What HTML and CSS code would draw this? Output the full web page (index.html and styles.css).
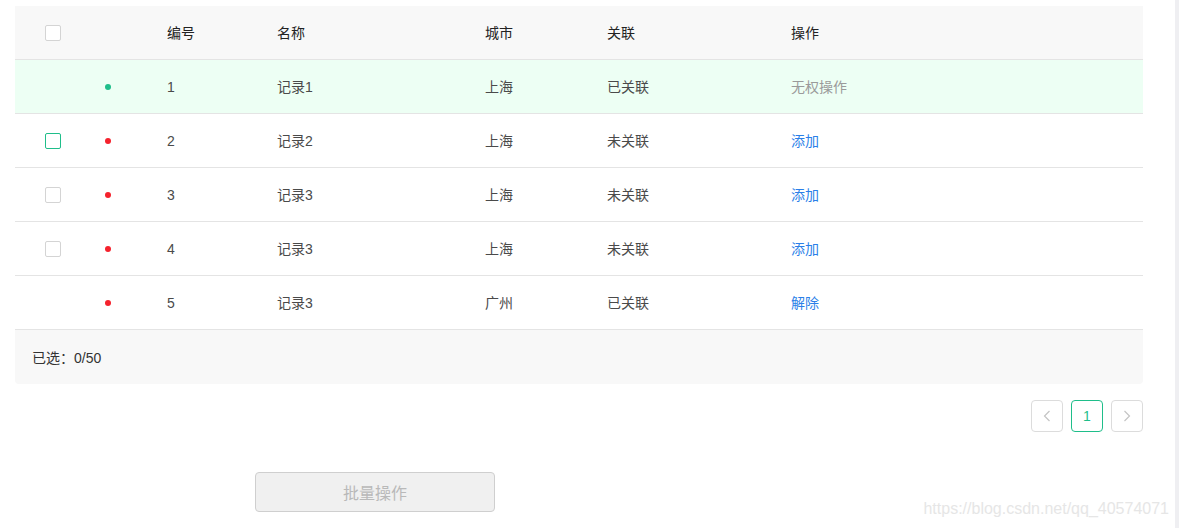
FILE: index.html
```html
<!DOCTYPE html>
<html lang="zh">
<head>
<meta charset="utf-8">
<title>列表</title>
<link rel="stylesheet" href="styles.css">
</head>
<body>
<div class="page">
  <main class="content">
    <div class="table">
      <div class="row head">
        <div class="cell c-check"><span class="checkbox"></span></div>
        <div class="cell c-dot"></div>
        <div class="cell">编号</div>
        <div class="cell">名称</div>
        <div class="cell">城市</div>
        <div class="cell">关联</div>
        <div class="cell">操作</div>
      </div>
      <div class="row highlight">
        <div class="cell c-check"></div>
        <div class="cell c-dot"><span class="dot green"></span></div>
        <div class="cell">1</div>
        <div class="cell">记录1</div>
        <div class="cell">上海</div>
        <div class="cell">已关联</div>
        <div class="cell muted">无权操作</div>
      </div>
      <div class="row">
        <div class="cell c-check"><span class="checkbox active"></span></div>
        <div class="cell c-dot"><span class="dot red"></span></div>
        <div class="cell">2</div>
        <div class="cell">记录2</div>
        <div class="cell">上海</div>
        <div class="cell">未关联</div>
        <div class="cell link">添加</div>
      </div>
      <div class="row">
        <div class="cell c-check"><span class="checkbox"></span></div>
        <div class="cell c-dot"><span class="dot red"></span></div>
        <div class="cell">3</div>
        <div class="cell">记录3</div>
        <div class="cell">上海</div>
        <div class="cell">未关联</div>
        <div class="cell link">添加</div>
      </div>
      <div class="row">
        <div class="cell c-check"><span class="checkbox"></span></div>
        <div class="cell c-dot"><span class="dot red"></span></div>
        <div class="cell">4</div>
        <div class="cell">记录3</div>
        <div class="cell">上海</div>
        <div class="cell">未关联</div>
        <div class="cell link">添加</div>
      </div>
      <div class="row">
        <div class="cell c-check"></div>
        <div class="cell c-dot"><span class="dot red"></span></div>
        <div class="cell">5</div>
        <div class="cell">记录3</div>
        <div class="cell">广州</div>
        <div class="cell">已关联</div>
        <div class="cell link">解除</div>
      </div>
      <div class="footer">已选：0/50</div>
    </div>
    <div class="pager">
      <span class="page-btn">
        <svg width="8" height="12" viewBox="0 0 8 12"><path d="M6.5 1 L1.5 6 L6.5 11" fill="none" stroke="#c4c4c4" stroke-width="1.2"/></svg>
      </span>
      <span class="page-btn current">1</span>
      <span class="page-btn">
        <svg width="8" height="12" viewBox="0 0 8 12"><path d="M1.5 1 L6.5 6 L1.5 11" fill="none" stroke="#c4c4c4" stroke-width="1.2"/></svg>
      </span>
    </div>
    <div class="actions">
      <button class="batch" disabled>批量操作</button>
    </div>
    <div class="watermark">https://blog.csdn.net/qq_40574071</div>
  </main>
  <aside class="scrollbar"></aside>
</div>
</body>
</html>
```
FILE: styles.css
```css
html, body {
  margin: 0;
  padding: 0;
  background: #ffffff;
}
body {
  font-family: "Liberation Sans", "Noto Sans CJK SC", sans-serif;
  font-size: 14px;
  color: #4a4a4a;
}
.page {
  display: flex;
  width: 1179px;
  height: 528px;
  overflow: hidden;
}
.content {
  position: relative;
  flex: 1;
  padding: 6px 0 0 15px;
}
.scrollbar {
  width: 4px;
  background: #efeff2;
}
.table {
  width: 1128px;
}
.row {
  display: grid;
  grid-template-columns: 60px 77px 110px 208px 122px 184px 1fr;
  height: 53px;
  border-bottom: 1px solid #e4e4e4;
  align-items: center;
}
.head {
  background: #f8f8f8;
  color: #222;
}
.highlight {
  background: #edfff4;
}
.cell {
  padding-left: 15px;
  line-height: 20px;
}
.c-check {
  padding-left: 30px;
  display: flex;
  align-items: center;
}
.c-dot {
  padding-left: 30px;
  display: flex;
  align-items: center;
}
.checkbox {
  display: block;
  width: 14px;
  height: 14px;
  border: 1px solid #d4d4d4;
  border-radius: 2px;
  background: #fff;
}
.checkbox.active {
  border-color: #1fbe8a;
}
.dot {
  display: block;
  width: 6px;
  height: 6px;
  border-radius: 50%;
}
.dot.green { background: #1fbe8a; }
.dot.red { background: #f5222d; }
.muted { color: #9a9a9a; }
.link { color: #2b7fe8; }
.footer {
  height: 54px;
  background: #f8f8f8;
  border-radius: 0 0 4px 4px;
  display: flex;
  align-items: center;
  padding-left: 17px;
  color: #333;
}
.pager {
  width: 1128px;
  display: flex;
  justify-content: flex-end;
  gap: 8px;
  margin-top: 16px;
}
.page-btn {
  box-sizing: border-box;
  width: 32px;
  height: 32px;
  border: 1px solid #dcdcdc;
  border-radius: 4px;
  display: flex;
  align-items: center;
  justify-content: center;
  color: #1fbe8a;
  font-size: 14px;
}
.page-btn.current {
  border-color: #1fbe8a;
}
.actions {
  margin-top: 40px;
  padding-left: 240px;
}
.batch {
  box-sizing: border-box;
  width: 240px;
  height: 40px;
  background: #f0f0f0;
  border: 1px solid #cfcfcf;
  border-radius: 4px;
  color: #b9b9b9;
  font-family: "Liberation Sans", "Noto Sans CJK SC", sans-serif;
  font-size: 16px;
  padding: 0;
}
.watermark {
  position: absolute;
  right: 6px;
  bottom: 10px;
  font-size: 16px;
  color: #e6e6e6;
}
```
